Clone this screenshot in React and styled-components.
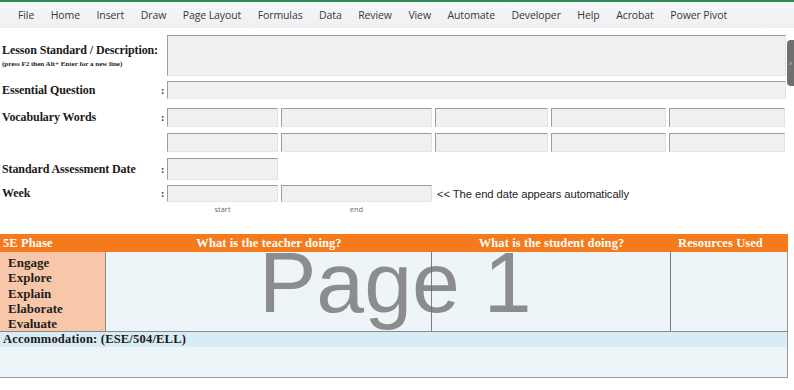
import React from 'react';
import styled, { createGlobalStyle } from 'styled-components';

const GlobalStyle = createGlobalStyle`
  html, body {
    margin: 0;
    padding: 0;
    background: #ffffff;
    width: 794px;
    height: 390px;
    overflow: hidden;
  }
`;

const menuItems = [
  'File', 'Home', 'Insert', 'Draw', 'Page Layout', 'Formulas', 'Data',
  'Review', 'View', 'Automate', 'Developer', 'Help', 'Acrobat', 'Power Pivot',
];

const phases = ['Engage', 'Explore', 'Explain', 'Elaborate', 'Evaluate'];

const App = () => (
  <Page>
    <GlobalStyle />
    <Ribbon>
      {menuItems.map((item) => (
        <MenuItem key={item}>{item}</MenuItem>
      ))}
    </Ribbon>

    <Sheet>
      <ScrollTab>›</ScrollTab>

      <FieldRow $top={7} $h={41}>
        <Label>
          <LabelMain>Lesson Standard / Description:</LabelMain>
          <LabelHint>(press F2 then Alt+ Enter for a new line)</LabelHint>
        </Label>
        <Colon />
        <Field $span />
      </FieldRow>

      <FieldRow $top={5} $h={18}>
        <Label><LabelMain>Essential Question</LabelMain></Label>
        <Colon>:</Colon>
        <Field $span />
      </FieldRow>

      <FieldRow $top={9} $h={19}>
        <Label><LabelMain>Vocabulary Words</LabelMain></Label>
        <Colon>:</Colon>
        <Field $w={111} />
        <Field $w={151} />
        <Field $w={113} />
        <Field $w={115} />
        <Field $w={116} />
      </FieldRow>

      <FieldRow $top={6} $h={19}>
        <Label />
        <Colon />
        <Field $w={111} />
        <Field $w={151} />
        <Field $w={113} />
        <Field $w={115} />
        <Field $w={116} />
      </FieldRow>

      <FieldRow $top={6} $h={22}>
        <Label><LabelMain>Standard Assessment Date</LabelMain></Label>
        <Colon>:</Colon>
        <Field $w={111} />
      </FieldRow>

      <FieldRow $top={5} $h={17}>
        <Label><LabelMain>Week</LabelMain></Label>
        <Colon>:</Colon>
        <Field $w={111} />
        <Field $w={151} />
        <Note>&lt;&lt; The end date appears automatically</Note>
      </FieldRow>

      <CaptionRow>
        <Caption $w={111}>start</Caption>
        <Caption $w={151}>end</Caption>
      </CaptionRow>

      <Table>
        <HeadCell $align="left">5E Phase</HeadCell>
        <HeadCell>What is the teacher doing?</HeadCell>
        <HeadCell>What is the student doing?</HeadCell>
        <HeadCell $pad="0 18px 0 0">Resources Used</HeadCell>

        <PhaseCell>
          {phases.map((p) => (
            <Phase key={p}>{p}</Phase>
          ))}
        </PhaseCell>
        <BodyCell />
        <BodyCell />
        <BodyCell $last />

        <AccomHead>Accommodation: (ESE/504/ELL)</AccomHead>
        <AccomBody />

        <Watermark>Page 1</Watermark>
      </Table>
    </Sheet>
  </Page>
);

export default App;

const Page = styled.div`
  width: 794px;
  height: 390px;
  overflow: hidden;
  background: #ffffff;
`;

const Ribbon = styled.div`
  height: 26px;
  border-top: 2px solid #2f8a57;
  background: linear-gradient(#f4f6f8, #eef0f2);
  display: flex;
  align-items: center;
  padding-left: 18px;
  gap: 16.5px;
  font-family: 'Open Sans', 'Noto Sans', sans-serif;
  font-size: 10.5px;
  color: #3a3a3a;
`;

const MenuItem = styled.span`
  white-space: nowrap;
  letter-spacing: -0.1px;
`;

const Sheet = styled.div`
  position: relative;
  padding-left: 2px;
`;

const ScrollTab = styled.div`
  position: absolute;
  right: 0;
  top: 5px;
  width: 7px;
  height: 46px;
  background: #6f6f6f;
  border-radius: 4px 0 0 4px;
  color: #d0d0d0;
  font-family: 'DejaVu Sans', sans-serif;
  font-size: 8px;
  display: flex;
  align-items: center;
  justify-content: center;
`;

const FieldRow = styled.div`
  display: flex;
  align-items: center;
  gap: 3px;
  margin-top: ${(p) => p.$top}px;
  height: ${(p) => p.$h}px;
`;

const Label = styled.div`
  width: 156px;
  flex-shrink: 0;
  display: flex;
  flex-direction: column;
  font-family: 'Liberation Serif', 'DejaVu Serif', serif;
  font-weight: 700;
  color: #1a1a1a;
`;

const LabelMain = styled.span`
  font-size: 12px;
  letter-spacing: -0.1px;
  white-space: nowrap;
`;

const LabelHint = styled.span`
  font-size: 7px;
  margin-top: 2px;
  white-space: nowrap;
`;

const Colon = styled.span`
  width: 3px;
  font-family: 'Liberation Serif', serif;
  font-weight: 700;
  font-size: 10px;
  color: #222;
  flex-shrink: 0;
`;

const Field = styled.div`
  box-sizing: border-box;
  height: 100%;
  width: ${(p) => (p.$span ? '619px' : `${p.$w}px`)};
  flex-shrink: 0;
  background: #f0f0f0;
  border-top: 1.5px solid #9c9c9c;
  border-left: 1.5px solid #9c9c9c;
  border-right: 1px solid #e2e2e2;
  border-bottom: 1px solid #e6e6e6;
`;

const Note = styled.span`
  margin-left: 2px;
  font-family: 'Liberation Sans', 'Open Sans', sans-serif;
  font-size: 11.2px;
  color: #222;
  white-space: nowrap;
  letter-spacing: -0.05px;
`;

const CaptionRow = styled.div`
  display: flex;
  gap: 3px;
  padding-left: 165px;
  height: 13px;
  align-items: center;
`;

const Caption = styled.span`
  width: ${(p) => p.$w}px;
  text-align: center;
  font-family: 'Open Sans', sans-serif;
  font-size: 7.5px;
  color: #6b6b6b;
`;

const Table = styled.div`
  position: relative;
  margin-top: 19px;
  margin-left: -2px;
  width: 788px;
  display: grid;
  grid-template-columns: 106px 326px 239px 117px;
  grid-template-rows: 18px 79px 16px 31px;
`;

const HeadCell = styled.div`
  background: #f47a1c;
  color: #ffffff;
  font-family: 'Liberation Serif', serif;
  font-weight: 700;
  font-size: 12.5px;
  display: flex;
  align-items: center;
  justify-content: ${(p) => (p.$align === 'left' ? 'flex-start' : 'center')};
  padding: ${(p) => p.$pad || (p.$align === 'left' ? '0 0 0 3px' : '0')};
  white-space: nowrap;
  letter-spacing: 0.1px;
`;

const PhaseCell = styled.div`
  background: #f8c6a8;
  border-right: 1.5px solid #8a8a8a;
  padding: 3px 0 0 8px;
  display: flex;
  flex-direction: column;
  font-family: 'Liberation Serif', serif;
  font-weight: 700;
  font-size: 13px;
  color: #1e1e1e;
`;

const Phase = styled.span`
  line-height: 15.3px;
`;

const BodyCell = styled.div`
  background: #eef5f9;
  border-right: 1px solid ${(p) => (p.$last ? '#9a9a9a' : '#7c7c7c')};
`;

const AccomHead = styled.div`
  grid-column: 1 / -1;
  background: #d9ebf3;
  border-top: 1px solid #8a8a8a;
  border-right: 1px solid #9a9a9a;
  display: flex;
  align-items: center;
  padding-left: 3px;
  font-family: 'Liberation Serif', serif;
  font-weight: 700;
  font-size: 12.5px;
  letter-spacing: 0.2px;
  color: #1a1a1a;
`;

const AccomBody = styled.div`
  grid-column: 1 / -1;
  background: #eef5f9;
  border-right: 1px solid #9a9a9a;
  border-bottom: 1px solid #9a9a9a;
`;

const Watermark = styled.div`
  position: absolute;
  left: 259px;
  top: 18px;
  font-family: 'Liberation Sans', Arial, sans-serif;
  font-size: 86px;
  line-height: 60px;
  color: rgba(110, 110, 110, 0.78);
  pointer-events: none;
  white-space: nowrap;
`;
